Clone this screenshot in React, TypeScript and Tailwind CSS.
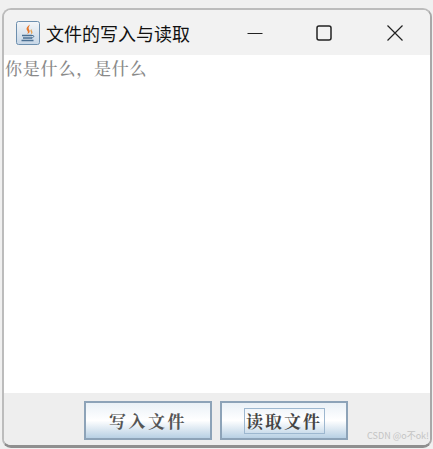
export default function App() {
  const cjk = { fontFamily: '"Noto Sans CJK SC", sans-serif' };
  const serif = { fontFamily: '"Noto Serif CJK SC", "Noto Sans CJK SC", serif' };
  return (
    <div className="w-[433px] h-[449px] bg-[#f0f0f0] overflow-hidden pt-[8px] pl-[2px] pr-[1px] pb-[1px]">
      <div className="h-[440px] bg-white border-2 border-[#bcbcbc] border-b-[3px] border-b-[#8f8f8f] border-r-[#a8a8a8] rounded-[9px] overflow-hidden flex flex-col">
        <div className="h-[45px] shrink-0 bg-[#f2f2f2] flex items-center pl-[12px]">
          <svg width="24" height="24" viewBox="0 0 24 24" className="shrink-0">
            <defs>
              <linearGradient id="ic" x1="0" y1="0" x2="0" y2="1">
                <stop offset="0" stopColor="#f4f6f8" />
                <stop offset="1" stopColor="#c6d6e6" />
              </linearGradient>
            </defs>
            <rect x="0.5" y="0.5" width="23" height="23" rx="2" fill="url(#ic)" stroke="#6d8fae" />
            <path d="M14 3.500c-4 3-4 4.500-2.500 6.500 1 1.500 0 2.500-.5 3 2.500-1 3.500-2.500 2-4.500-1-1.500 0-3 1-5z" fill="#e8772a" />
            <path d="M16 8c-2 1-2 2-1 3 .5 1 0 2-.5 2.500 2-1 2.500-2 1.500-3.500-.5-.5-.5-1.500 0-2z" fill="#e8a04a" />
            <path d="M6 14.500h10M7 17h9M5.500 19.500h12" stroke="#4a6f92" strokeWidth="1.300" fill="none" />
            <path d="M16 14.500c2.500-.5 2.500 2-.5 2.500" stroke="#4a6f92" fill="none" />
          </svg>
          <span className="ml-[6px] text-[18px] leading-[24px] text-[#111]" style={cjk}>文件的写入与读取</span>
          <div className="ml-auto flex items-center">
            <svg width="16" height="16" viewBox="0 0 16 16" className="mr-[53px]">
              <path d="M0.500 8.500h15" stroke="#222" strokeWidth="1.200" />
            </svg>
            <svg width="16" height="16" viewBox="0 0 16 16" className="mr-[55px]">
              <rect x="1" y="1" width="14" height="14" rx="2" fill="none" stroke="#222" strokeWidth="1.500" />
            </svg>
            <svg width="16" height="16" viewBox="0 0 16 16" className="mr-[27px]">
              <path d="M0.500 0.500L15.500 15.500M15.500 0.500L0.500 15.500" stroke="#222" strokeWidth="1.200" />
            </svg>
          </div>
        </div>
        <div className="flex-1 bg-white pl-[1px] text-[17px] leading-[26px] text-[#8a8a8a] font-medium tracking-[0.8px] whitespace-nowrap" style={serif}>
          你是什么，是什么
        </div>
        <div className="h-[52px] shrink-0 bg-[#eeeeee] relative flex justify-center gap-[8px] pt-[8px] pr-[2px]">
          <button className="w-[128px] h-[39px] border-2 border-[#8da3b8] bg-gradient-to-b from-[#eaf1f7] via-[#ffffff] to-[#b8d0e4] text-[17px] font-bold text-[#555] tracking-[2.500px] whitespace-nowrap" style={serif}>
            写入文件
          </button>
          <button className="w-[128px] h-[39px] border-2 border-[#8da3b8] bg-gradient-to-b from-[#eaf1f7] via-[#ffffff] to-[#b8d0e4] flex items-center justify-center" style={serif}>
            <span className="w-[81px] h-[26px] border border-[#9db7cf] text-[17px] font-bold text-[#444] tracking-[2px] leading-[24px] text-center whitespace-nowrap">读取文件</span>
          </button>
          <span className="absolute right-[1px] bottom-[3px] text-[9px] leading-[12px] text-[#c4c4c4] whitespace-nowrap" style={cjk}>CSDN @o不ok!</span>
        </div>
      </div>
    </div>
  );
}
